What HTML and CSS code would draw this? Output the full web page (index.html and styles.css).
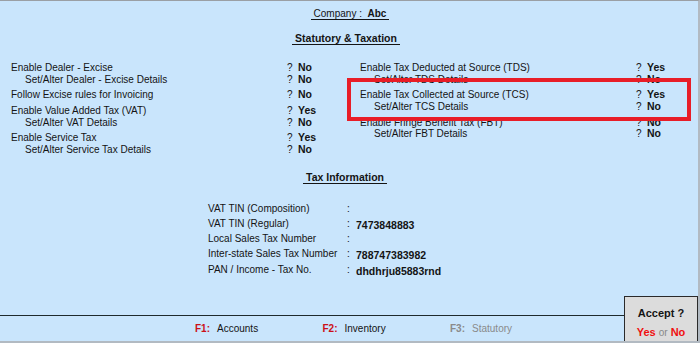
FILE: index.html
```html
<!DOCTYPE html>
<html>
<head>
<meta charset="utf-8">
<link rel="stylesheet" href="styles.css">
</head>
<body>
<div class="screen">
  <header class="top">
    <div class="company"><span class="ul">Company&nbsp;:&nbsp; <b>Abc</b></span></div>
    <div class="title"><span class="ul">Statutory &amp; Taxation</span></div>
  </header>

  <section class="options">
    <div class="col">
      <div class="group">
        <div class="row"><span class="lbl">Enable Dealer - Excise</span><span class="q">?</span><b>No</b></div>
        <div class="row sub"><span class="lbl">Set/Alter Dealer - Excise Details</span><span class="q">?</span><b>No</b></div>
      </div>
      <div class="group">
        <div class="row"><span class="lbl">Follow Excise rules for Invoicing</span><span class="q">?</span><b>No</b></div>
      </div>
      <div class="group">
        <div class="row"><span class="lbl">Enable Value Added Tax (VAT)</span><span class="q">?</span><b>Yes</b></div>
        <div class="row sub"><span class="lbl">Set/Alter VAT Details</span><span class="q">?</span><b>No</b></div>
      </div>
      <div class="group">
        <div class="row"><span class="lbl">Enable Service Tax</span><span class="q">?</span><b>Yes</b></div>
        <div class="row sub"><span class="lbl">Set/Alter Service Tax Details</span><span class="q">?</span><b>No</b></div>
      </div>
    </div>
    <div class="col">
      <div class="group">
        <div class="row"><span class="lbl">Enable Tax Deducted at Source (TDS)</span><span class="q">?</span><b>Yes</b></div>
        <div class="row sub"><span class="lbl">Set/Alter TDS Details</span><span class="q">?</span><b>No</b></div>
      </div>
      <div class="group">
        <div class="row"><span class="lbl">Enable Tax Collected at Source (TCS)</span><span class="q">?</span><b>Yes</b></div>
        <div class="row sub"><span class="lbl">Set/Alter TCS Details</span><span class="q">?</span><b>No</b></div>
      </div>
      <div class="group">
        <div class="row"><span class="lbl">Enable Fringe Benefit Tax (FBT)</span><span class="q">?</span><b>No</b></div>
        <div class="row sub"><span class="lbl">Set/Alter FBT Details</span><span class="q">?</span><b>No</b></div>
      </div>
    </div>
  </section>

  <section class="taxinfo">
    <div class="title2"><span class="ul">Tax Information</span></div>
    <div class="tgrid">
      <span>VAT TIN (Composition)</span><span class="c">:</span><b></b>
      <span>VAT TIN (Regular)</span><span class="c">:</span><b>7473848883</b>
      <span>Local Sales Tax Number</span><span class="c">:</span><b></b>
      <span>Inter-state Sales Tax Number</span><span class="c">:</span><b>788747383982</b>
      <span>PAN / Income - Tax No.</span><span class="c">:</span><b>dhdhrju85883rnd</b>
    </div>
  </section>

  <footer class="footer">
    <div class="fk"><span class="key">F1:</span><span>Accounts</span></div>
    <div class="fk"><span class="key">F2:</span><span>Inventory</span></div>
    <div class="fk off"><span class="key">F3:</span><span>Statutory</span></div>
  </footer>

  <div class="accept">
    <div class="acc-title">Accept ?</div>
    <div class="acc-opts"><b class="red">Yes</b> <span class="or">or</span> <b class="red">No</b></div>
  </div>

  <div class="highlight"></div>
</div>
</body>
</html>
```

FILE: styles.css
```css
html, body {
  margin: 0;
  padding: 0;
  background: #b4bcc4;
}

.screen {
  position: relative;
  width: 700px;
  height: 343px;
  box-sizing: border-box;
  border-top: 1px solid #9a9fa4;
  border-right: 2px solid #b2bac2;
  border-bottom: 2px solid #b2bac2;
  background: #c9e5fc;
  font-family: "Liberation Sans", Arial, sans-serif;
  font-size: 10px;
  color: #141414;
  display: flex;
  flex-direction: column;
  overflow: hidden;
}

b { font-weight: bold; }

.ul {
  display: inline-block;
  border-bottom: 1px solid #141414;
  padding: 0 3px;
}

.top {
  display: flex;
  flex-direction: column;
  align-items: center;
}

.company {
  margin-top: 7px;
  line-height: 11px;
  padding-left: 2px;
}

.title {
  margin-top: 13px;
  line-height: 11px;
  font-weight: bold;
  font-size: 10.5px;
  padding-right: 6px;
}

.options {
  margin-top: 17px;
  padding-left: 11px;
  display: grid;
  grid-template-columns: 349px 338px;
}

.col {
  display: flex;
  flex-direction: column;
  gap: 3.9px;
}

.row {
  display: grid;
  grid-template-columns: 276px 11px auto;
  line-height: 11.7px;
}

.row b { font-size: 10.5px; }

.row.sub .lbl { padding-left: 14px; }

.taxinfo {
  margin-top: 16px;
  display: flex;
  flex-direction: column;
}

.title2 {
  align-self: center;
  line-height: 11px;
  font-weight: bold;
  font-size: 10.5px;
  padding-right: 8px;
}

.tgrid {
  margin-top: 17px;
  padding-left: 208px;
  display: grid;
  grid-template-columns: 139px 9px auto;
  line-height: 15.25px;
}

.tgrid b {
  font-size: 10.5px;
  position: relative;
  top: 2px;
}

.footer {
  margin-top: auto;
  height: 26px;
  box-sizing: border-box;
  border-top: 1px solid #1e2a2c;
  display: flex;
  align-items: center;
  padding-left: 195px;
  line-height: 25px;
}

.fk {
  width: 127.5px;
  display: flex;
}

.fk .key {
  width: 22px;
  color: #cc1018;
  font-weight: bold;
}

.fk.off, .fk.off .key { color: #8a8a8a; }

.accept {
  position: absolute;
  left: 624px;
  top: 295px;
  width: 74px;
  height: 48px;
  box-sizing: border-box;
  border: 1px solid #2a2a2a;
  background: #dcdcdc;
  text-align: center;
}

.acc-title {
  margin-top: 10px;
  font-weight: bold;
  font-size: 11px;
  line-height: 13px;
}

.acc-opts {
  margin-top: 6px;
  font-size: 11px;
  line-height: 13px;
}

.red { color: #f01010; }
.or { color: #888; font-size: 10px; }

.highlight {
  position: absolute;
  left: 347px;
  top: 77px;
  width: 344px;
  height: 43px;
  box-sizing: border-box;
  border: 4px solid #e81d27;
}
```
